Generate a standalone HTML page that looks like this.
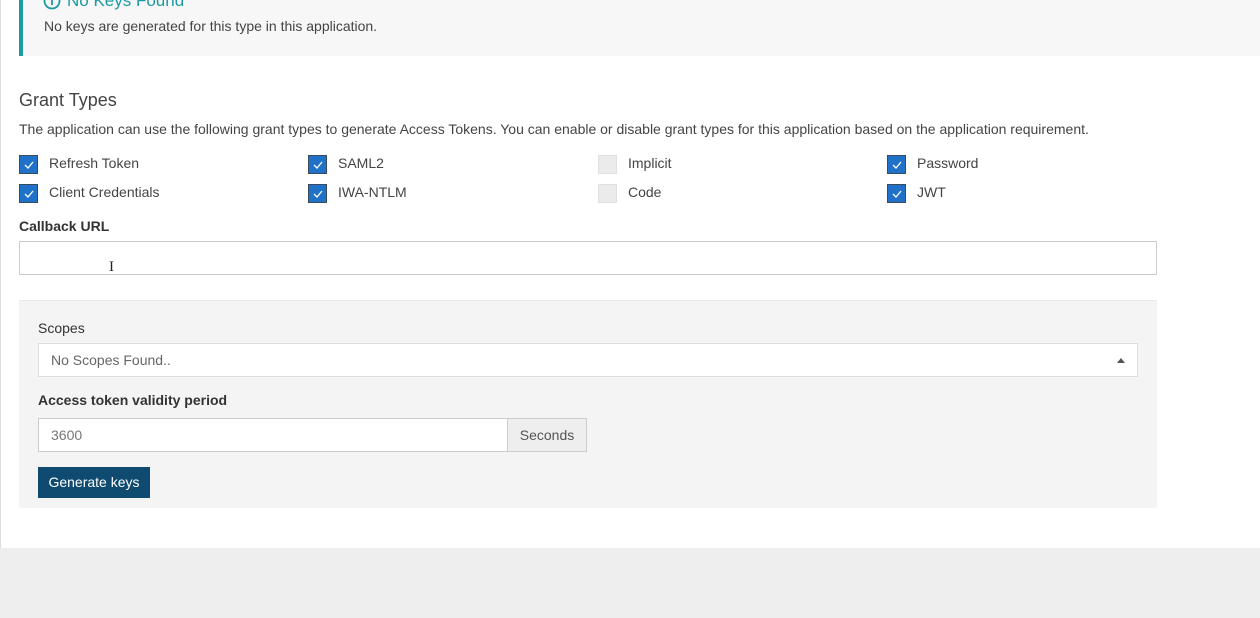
<!DOCTYPE html>
<html><head><style>
*{box-sizing:border-box;margin:0;padding:0}
body{width:1260px;height:618px;background:#eee;font-family:"Liberation Sans",sans-serif;color:#333;position:relative;overflow:hidden}
.main{position:absolute;left:0;top:0;width:1260px;height:548px;background:#fff;border-left:1px solid #ddd}
.abs{position:absolute}
.alert{left:18px;top:0;width:1242px;height:56px;background:#f7f7f7;border-left:4px solid #1a9ba5}
.cb{width:19px;height:19px;background:#1f72c8;border:1px solid #3a4a5a}
.cb svg{position:absolute;left:4px;top:5px}
.cbu{width:19px;height:19px;background:#ebebeb;border:1px solid #e0e0e0}
.lbl{font-size:14px;color:#444}
</style></head><body>
<div class="main">
<div class="abs alert">
 <svg class="abs" style="left:20px;top:-8px" width="18" height="18" viewBox="0 0 18 18"><circle cx="9" cy="9" r="7.5" fill="none" stroke="#1a9ba5" stroke-width="1.8"/><rect x="8.1" y="7" width="1.8" height="6" fill="#1a9ba5"/></svg>
 <div class="abs" style="left:44px;top:-9px;font-size:17px;color:#1a9ba5">No Keys Found</div>
 <div class="abs" style="left:21px;top:18px;font-size:14px;color:#444">No keys are generated for this type in this application.</div>
</div>
<div class="abs" style="left:18px;top:90px;font-size:18px;color:#444">Grant Types</div>
<div class="abs" style="left:18px;top:121px;font-size:14px;color:#444">The application can use the following grant types to generate Access Tokens. You can enable or disable grant types for this application based on the application requirement.</div>

<div class="abs cb" style="left:18px;top:155px"><svg width="10" height="8"><path d="M1 4l3 3 5-6" fill="none" stroke="#fff" stroke-width="1.3"/></svg></div>
<div class="abs lbl" style="left:48px;top:155px">Refresh Token</div>
<div class="abs cb" style="left:18px;top:184px"><svg width="10" height="8"><path d="M1 4l3 3 5-6" fill="none" stroke="#fff" stroke-width="1.3"/></svg></div>
<div class="abs lbl" style="left:48px;top:184px">Client Credentials</div>
<div class="abs cb" style="left:307px;top:155px"><svg width="10" height="8"><path d="M1 4l3 3 5-6" fill="none" stroke="#fff" stroke-width="1.3"/></svg></div>
<div class="abs lbl" style="left:337px;top:155px">SAML2</div>
<div class="abs cb" style="left:307px;top:184px"><svg width="10" height="8"><path d="M1 4l3 3 5-6" fill="none" stroke="#fff" stroke-width="1.3"/></svg></div>
<div class="abs lbl" style="left:337px;top:184px">IWA-NTLM</div>
<div class="abs cbu" style="left:597px;top:155px"></div>
<div class="abs lbl" style="left:627px;top:155px">Implicit</div>
<div class="abs cbu" style="left:597px;top:184px"></div>
<div class="abs lbl" style="left:627px;top:184px">Code</div>
<div class="abs cb" style="left:886px;top:155px"><svg width="10" height="8"><path d="M1 4l3 3 5-6" fill="none" stroke="#fff" stroke-width="1.3"/></svg></div>
<div class="abs lbl" style="left:916px;top:155px">Password</div>
<div class="abs cb" style="left:886px;top:184px"><svg width="10" height="8"><path d="M1 4l3 3 5-6" fill="none" stroke="#fff" stroke-width="1.3"/></svg></div>
<div class="abs lbl" style="left:916px;top:184px">JWT</div>

<div class="abs" style="left:18px;top:218px;font-size:14px;font-weight:bold;color:#333">Callback URL</div>
<div class="abs" style="left:18px;top:241px;width:1138px;height:34px;border:1px solid #ccc;background:#fff"></div>
<div class="abs" style="left:108px;top:259px;font-size:15px;color:#222;font-family:'Liberation Serif',serif">I</div>

<div class="abs" style="left:18px;top:300px;width:1138px;height:208px;background:#f4f4f4;border-top:1px solid #e8e8e8">
 <div class="abs" style="left:19px;top:19px;font-size:14px;color:#333">Scopes</div>
 <div class="abs" style="left:19px;top:42px;width:1100px;height:34px;background:#fff;border:1px solid #ddd">
  <div class="abs" style="left:12px;top:8px;font-size:14px;color:#666">No Scopes Found..</div>
  <div class="abs" style="left:1078px;top:14px;width:0;height:0;border-left:4px solid transparent;border-right:4px solid transparent;border-bottom:5px solid #555"></div>
 </div>
 <div class="abs" style="left:19px;top:91px;font-size:14px;font-weight:bold;color:#333">Access token validity period</div>
 <div class="abs" style="left:19px;top:117px;width:470px;height:34px;background:#fff;border:1px solid #ccc">
  <div class="abs" style="left:12px;top:8px;font-size:14px;color:#777">3600</div>
 </div>
 <div class="abs" style="left:488px;top:117px;width:80px;height:34px;background:#eee;border:1px solid #ccc;font-size:14px;color:#555;text-align:center;line-height:32px">Seconds</div>
 <div class="abs" style="left:19px;top:166px;width:112px;height:31px;background:#0f4a70;color:#fff;font-size:14px;text-align:center;line-height:31px">Generate keys</div>
</div>
</div>
</body></html>
